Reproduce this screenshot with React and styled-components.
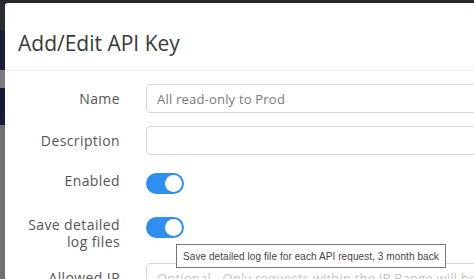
import React from 'react'
import styled, { createGlobalStyle } from 'styled-components'

const GlobalStyle = createGlobalStyle`
  html, body {
    margin: 0;
    padding: 0;
    background: #25292d;
    overflow: hidden;
  }
  * { box-sizing: border-box; }
`

const backdrop = [
  { h: 27, c: '#2a2c30' },
  { h: 40, c: '#1c1f3a' },
  { h: 18, c: '#7c7c80' },
  { h: 37, c: '#171a36' },
  { h: 154, c: '#707070' },
]

const App = () => {
  return (
    <>
      <GlobalStyle />
      <Page>
        <Strip>
          {backdrop.map((b, i) => (
            <StripPart key={i} $h={b.h} $c={b.c} />
          ))}
        </Strip>
        <Modal>
          <Header>
            <Title>Add/Edit API Key</Title>
          </Header>
          <Body>
            <Row>
              <Label>Name</Label>
              <Input defaultValue="All read-only to Prod" />
            </Row>
            <Row $mt={13}>
              <Label>Description</Label>
              <Input />
            </Row>
            <Row $mt={11}>
              <Label>Enabled</Label>
              <ToggleCell>
                <Toggle><Knob /></Toggle>
              </ToggleCell>
            </Row>
            <Row $mt={15}>
              <Label>Save detailed<br />log files</Label>
              <ToggleCell>
                <Toggle><Knob /></Toggle>
                <Tooltip>Save detailed log file for each API request, 3 month back</Tooltip>
              </ToggleCell>
            </Row>
            <Row $mt={7}>
              <Label>Allowed IP</Label>
              <Input placeholder="Optional - Only requests within the IP Range will be accepted" />
            </Row>
          </Body>
        </Modal>
      </Page>
    </>
  )
}

export default App

const Page = styled.div`
  display: flex;
  align-items: flex-start;
  width: 474px;
  height: 279px;
  padding-top: 3px;
  overflow: hidden;
`

const Strip = styled.div`
  width: 5px;
  flex-shrink: 0;
  display: flex;
  flex-direction: column;
`

const StripPart = styled.div`
  height: ${p => p.$h}px;
  flex-shrink: 0;
  background: ${p => p.$c};
`

const Modal = styled.div`
  width: 600px;
  flex-shrink: 0;
  min-height: 320px;
  background: #fff;
  border-top-left-radius: 3px;
  display: flex;
  flex-direction: column;
`

const Header = styled.div`
  flex-shrink: 0;
  height: 68px;
  padding: 26px 13px 0;
  border-bottom: 1px solid #e9ecef;
`

const Title = styled.h4`
  margin: 0;
  font-family: "Open Sans", sans-serif;
  font-weight: 400;
  font-size: 21px;
  line-height: 28px;
  color: #3a3a3a;
`

const Body = styled.div`
  flex-shrink: 0;
  padding: 13px 16px 0;
  display: flex;
  flex-direction: column;
`

const Row = styled.div`
  display: grid;
  grid-template-columns: 99px 1fr;
  column-gap: 26px;
  margin-top: ${p => p.$mt || 0}px;
  min-height: 29px;
`

const Label = styled.div`
  text-align: right;
  padding: 6px 0;
  font-family: "Open Sans", sans-serif;
  font-size: 14px;
  line-height: 17px;
  letter-spacing: 0.4px;
  color: #555;
`

const Input = styled.input`
  height: 29px;
  width: 100%;
  border: 1px solid #d8d8d8;
  border-radius: 4px;
  padding: 0 10px;
  font-family: "Open Sans", sans-serif;
  font-size: 13px;
  letter-spacing: 0.2px;
  color: #7a7a7a;
  outline: none;
  &::placeholder {
    color: #c4c4c4;
  }
`

const ToggleCell = styled.div`
  position: relative;
  padding-top: 7px;
`

const Toggle = styled.div`
  width: 38px;
  height: 21px;
  border-radius: 11px;
  background: #2f8ff0;
  display: flex;
  align-items: center;
  justify-content: flex-end;
  padding: 0 2px;
`

const Knob = styled.div`
  width: 17px;
  height: 17px;
  border-radius: 50%;
  background: #fff;
`

const Tooltip = styled.div`
  position: absolute;
  left: 30px;
  top: 34px;
  height: 24px;
  padding: 0 6px;
  display: flex;
  align-items: center;
  white-space: nowrap;
  background: #fff;
  border: 1px solid #767676;
  font-family: "Liberation Sans", sans-serif;
  font-size: 10px;
  letter-spacing: 0.08px;
  color: #444;
  z-index: 10;
`
